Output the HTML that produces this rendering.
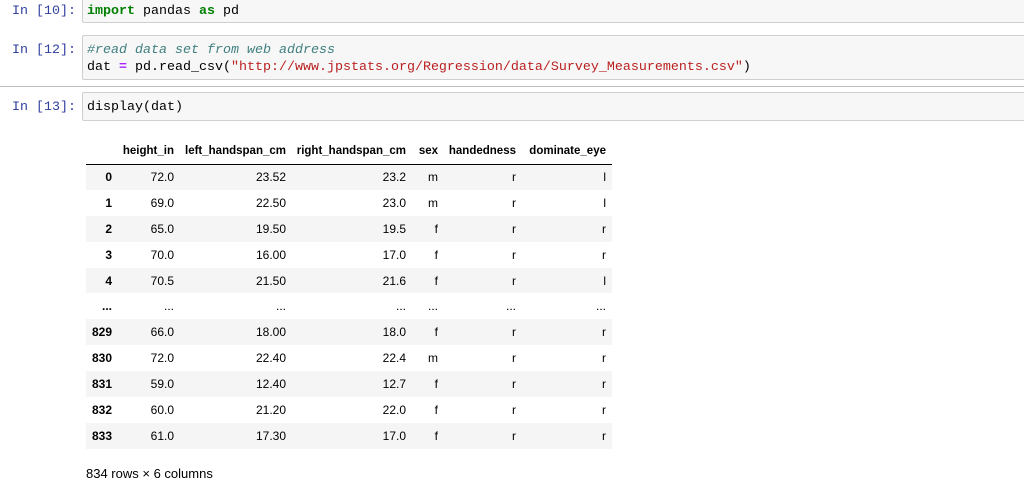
<!DOCTYPE html>
<html><head><style>
body{margin:0;width:1024px;height:494px;background:#fff;position:relative;overflow:hidden;font-family:"Liberation Sans",sans-serif}
.p{position:absolute;left:12px;font:13.33px "Liberation Mono",monospace;color:#303f9f}
.box{position:absolute;left:82px;right:-2px;background:#f7f7f7;border:1px solid #cfcfcf;border-radius:2px}
.code{position:absolute;left:87px;font:13.33px/17px "Liberation Mono",monospace;color:#000;white-space:pre}
.kw{color:#008000;font-weight:bold}.cm{color:#408080;font-style:italic}.st{color:#ba2121}.op{color:#aa22ff;font-weight:bold}
table{position:absolute;left:86px;top:138px;border-collapse:collapse;font-size:12px;color:#000;table-layout:fixed}
td,th{height:25.9px;padding:0 6px 0 0;text-align:right;box-sizing:border-box}
thead th{border-bottom:1px solid #000;height:26px;padding-bottom:0;font-size:11.5px}
tbody tr:nth-child(odd){background:#f5f5f5}
</style></head><body>
<div class="box" style="top:-2px;height:23px"></div>
<div class="p" style="top:4px">In [10]:</div>
<div class="code" style="top:3px"><span class="kw">import</span> pandas <span class="kw">as</span> pd</div>

<div class="box" style="top:35px;height:43px"></div>
<div class="p" style="top:43px">In [12]:</div>
<div class="code" style="top:42px"><span class="cm">#read data set from web address</span>
dat <span class="op">=</span> pd.read_csv(<span class="st">"http://www.jpstats.org/Regression/data/Survey_Measurements.csv"</span>)</div>

<div style="position:absolute;left:0;right:0;top:86px;border-top:1px solid #bdbdbd"></div>
<div class="box" style="top:92px;height:27px"></div>
<div class="p" style="top:100px">In [13]:</div>
<div class="code" style="top:99px">display(dat)</div>

<table>
<colgroup><col style="width:32px"><col style="width:62px"><col style="width:112px"><col style="width:120px"><col style="width:32px"><col style="width:78px"><col style="width:90px"></colgroup>
<thead><tr><th></th><th>height_in</th><th>left_handspan_cm</th><th>right_handspan_cm</th><th>sex</th><th>handedness</th><th>dominate_eye</th></tr></thead>
<tbody>
<tr><th>0</th><td>72.0</td><td>23.52</td><td>23.2</td><td>m</td><td>r</td><td>l</td></tr>
<tr><th>1</th><td>69.0</td><td>22.50</td><td>23.0</td><td>m</td><td>r</td><td>l</td></tr>
<tr><th>2</th><td>65.0</td><td>19.50</td><td>19.5</td><td>f</td><td>r</td><td>r</td></tr>
<tr><th>3</th><td>70.0</td><td>16.00</td><td>17.0</td><td>f</td><td>r</td><td>r</td></tr>
<tr><th>4</th><td>70.5</td><td>21.50</td><td>21.6</td><td>f</td><td>r</td><td>l</td></tr>
<tr style="background:#fff"><th>...</th><td>...</td><td>...</td><td>...</td><td>...</td><td>...</td><td>...</td></tr>
<tr><th>829</th><td>66.0</td><td>18.00</td><td>18.0</td><td>f</td><td>r</td><td>r</td></tr>
<tr style="background:#fff"><th>830</th><td>72.0</td><td>22.40</td><td>22.4</td><td>m</td><td>r</td><td>r</td></tr>
<tr><th>831</th><td>59.0</td><td>12.40</td><td>12.7</td><td>f</td><td>r</td><td>r</td></tr>
<tr style="background:#fff"><th>832</th><td>60.0</td><td>21.20</td><td>22.0</td><td>f</td><td>r</td><td>r</td></tr>
<tr><th>833</th><td>61.0</td><td>17.30</td><td>17.0</td><td>f</td><td>r</td><td>r</td></tr>
</tbody></table>
<div style="position:absolute;left:86px;top:466px;font-size:13px;color:#000">834 rows × 6 columns</div>
</body></html>
